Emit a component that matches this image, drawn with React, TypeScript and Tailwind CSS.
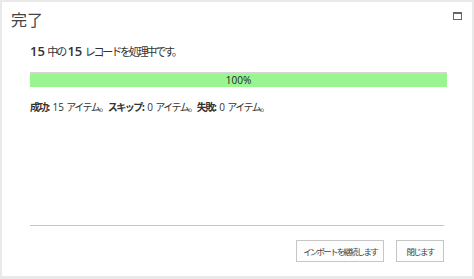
function J({ children, bold, tight }: { children: React.ReactNode; bold?: boolean; tight?: boolean }) {
  const t = tight ? "tracking-[-2.2px]" : "tracking-[-1.5px]";
  return <span className={bold ? "font-bold " + t : t}>{children}</span>;
}

export default function App() {
  const jp = { fontFamily: '"Noto Sans CJK JP", "Noto Sans", sans-serif' };
  const num = { fontFamily: '"Open Sans", sans-serif' };
  return (
    <div className="h-[279px] w-[474px] bg-[#e9e9e9] p-[2px] pb-[3px]" style={jp}>
      <div className="flex h-full w-full flex-col bg-white text-[#333]">
        {/* Title */}
        <div className="flex items-start justify-between pl-[9px] pr-[10px] pt-[7px]">
          <h1 className="text-[16px] leading-[20px] text-[#444]">完了</h1>
          <svg width="9" height="8" viewBox="0 0 9 8" className="mt-[3px]">
            <rect x="0.5" y="0.5" width="8" height="7" fill="none" stroke="#666" />
            <rect x="0.5" y="0.5" width="8" height="1.5" fill="#666" />
          </svg>
        </div>

        {/* Body */}
        <div className="flex flex-1 flex-col pl-[28px] pr-[25px]">
          <p className="mt-[14px] whitespace-pre text-[11px] leading-[16px]">
            <span className="text-[13px] font-semibold" style={num}>15</span>
            {" "}<J tight>中の</J>{" "}
            <span className="text-[13px] font-semibold" style={num}>15</span>
            {" "}<J tight>レコードを処理中です。</J>
          </p>

          <div className="mt-[13px] border-t-2 border-[#d4d4d4] bg-[#98f590]">
            <div className="text-center text-[10px] leading-[13px] text-[#222]" style={num}>100%</div>
          </div>

          <p className="mt-[12px] whitespace-pre text-[10px] leading-[16px]">
            <J bold>成功</J><b>: </b><span style={num}>15</span> <J>アイテム。</J>
            <J bold>スキップ</J><b>: </b><span style={num}>0</span> <J>アイテム。</J>
            <J bold>失敗</J><b>: </b><span style={num}>0</span> <J>アイテム。</J>
          </p>

          <div className="mt-auto mr-[3px] border-t border-[#c4c4c4]" />

          <div className="mb-[14px] mr-[3px] mt-[14px] flex justify-end gap-[12px]">
            <button className="h-[22px] w-[88px] border border-[#c6c6c6] bg-[#fdfdfd] text-[8.5px] tracking-[-1.8px] text-[#444]">
              インポートを継続します
            </button>
            <button className="h-[22px] w-[48px] border border-[#c6c6c6] bg-[#fdfdfd] text-[8.5px] tracking-[-1.8px] text-[#444]">
              閉じます
            </button>
          </div>
        </div>
      </div>
    </div>
  );
}
